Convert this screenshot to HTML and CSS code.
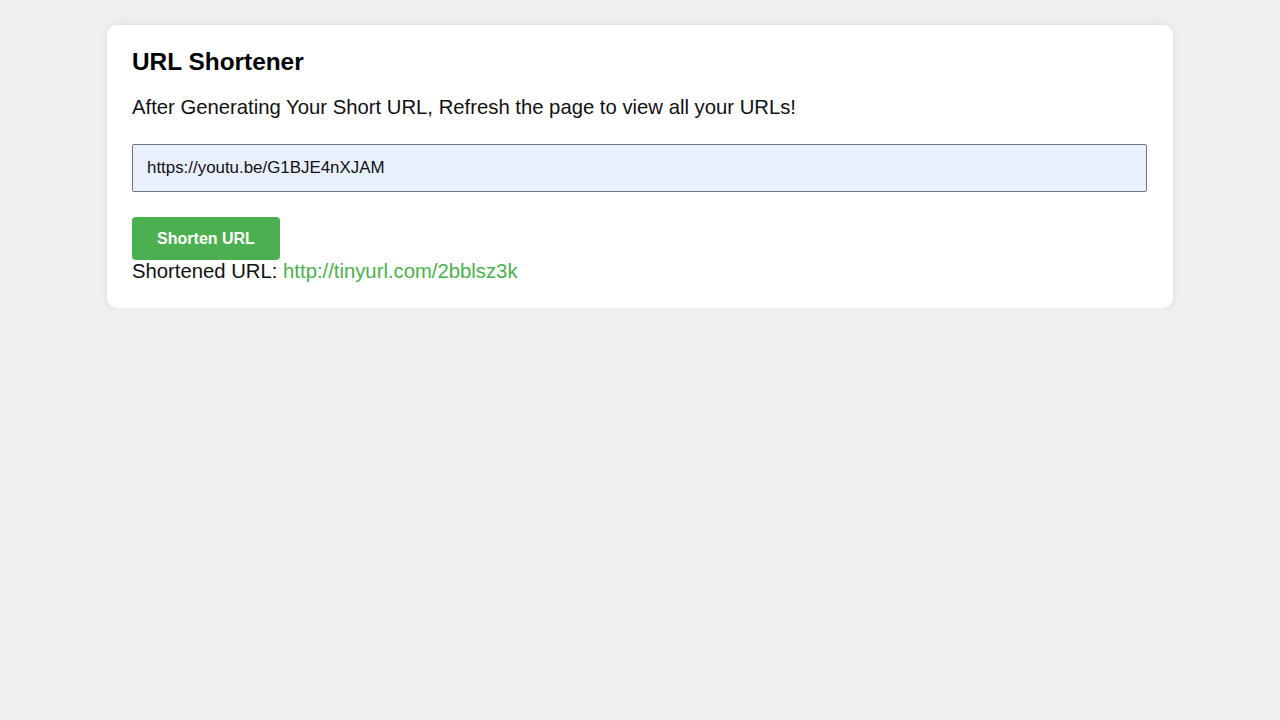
FILE: index.html
```html
<!DOCTYPE html>
<html>
<head>
<meta charset="utf-8">
<link rel="stylesheet" href="styles.css">
</head>
<body>
<div class="card">
  <h2 class="title">URL Shortener</h2>
  <p class="note">After Generating Your Short URL, Refresh the page to view all your URLs!</p>
  <input class="url-input" type="text" value="https://youtu.be/G1BJE4nXJAM">
  <button class="btn">Shorten URL</button>
  <div class="result">Shortened URL: <a class="link" href="#">http://tinyurl.com/2bblsz3k</a></div>
</div>
</body>
</html>
```
FILE: styles.css
```css
html, body {
  margin: 0;
  padding: 0;
}
body {
  background: #efefef;
  font-family: "Liberation Sans", Arial, sans-serif;
  color: #111;
  padding-top: 25px;
}
.card {
  width: 1015px;
  margin: 0 auto;
  background: #fff;
  border-radius: 10px;
  box-shadow: 0 0 10px rgba(0,0,0,0.08);
  padding: 23px 26px 26px 25px;
}
.title {
  margin: 0 0 20px;
  font-size: 24.4px;
  font-weight: bold;
  color: #000;
}
.note {
  margin: 0 0 25px;
  font-size: 20.3px;
  color: #111;
}
.url-input {
  display: block;
  box-sizing: border-box;
  width: 100%;
  height: 48px;
  padding: 0 14px;
  border: 1px solid #767676;
  border-radius: 2px;
  background: #e8f0fe;
  font-family: "Liberation Sans", Arial, sans-serif;
  font-size: 16.9px;
  color: #111;
  margin: 0 0 25px;
}
.btn {
  display: block;
  width: 148px;
  height: 43px;
  background: #4caf50;
  color: #fff;
  border: none;
  border-radius: 4px;
  font-family: "Liberation Sans", Arial, sans-serif;
  font-size: 16px;
  font-weight: bold;
  padding: 0;
}
.result {
  font-size: 20.3px;
  line-height: 22px;
  color: #111;
}
.link {
  color: #4caf50;
  text-decoration: none;
}
```
